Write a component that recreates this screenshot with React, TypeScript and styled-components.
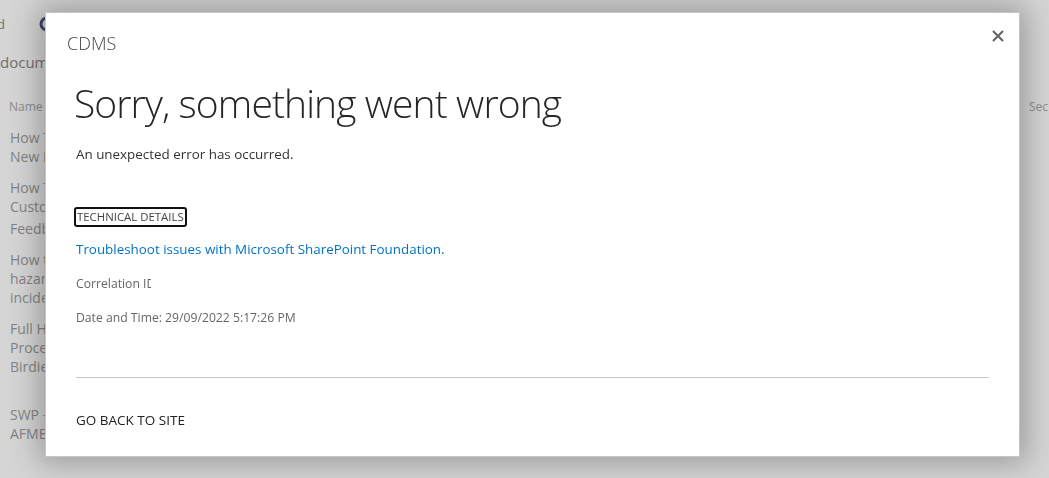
import React from "react";
import styled, { createGlobalStyle } from "styled-components";

const GlobalStyle = createGlobalStyle`
    html, body {
        margin: 0;
        padding: 0;
        width: 100%;
        height: 100%;
        overflow: hidden;
    }
    body {
        background: #d5d5d5;
        font-family: "Open Sans", "Noto Sans", sans-serif;
    }
`

// pagina de fundo (atras do overlay)
const Pagina = styled.div`
    width: 1049px;
    height: 478px;
    color: #838383;
    font-size: 14px;
`

const TopBar = styled.div`
    display: flex;
    align-items: center;
    gap: 30px;
    height: 24px;
    padding-top: 12px;
    font-size: 13px;
    color: #6f6f6f;
`

const Breadcrumb = styled.div`
    margin-top: 16px;
    font-size: 15px;
    color: #6f6f6f;
    white-space: nowrap;
`

const Cabecalho = styled.div`
    display: flex;
    justify-content: space-between;
    margin-top: 26px;
    padding: 0 0 0 9px;
    font-size: 12px;
    color: #8c8c8c;
    white-space: nowrap;
`

const Lista = styled.div`
    display: flex;
    flex-direction: column;
    padding-left: 10px;
    margin-top: 13px;
`

const Item = styled.div<{ $espaco: number }>`
    display: flex;
    flex-direction: column;
    margin-top: ${(p) => p.$espaco}px;
    line-height: 19px;
    white-space: nowrap;
`

const Dialogo = styled.div`
    position: fixed;
    top: 12px;
    left: 45px;
    width: 975px;
    height: 445px;
    box-sizing: border-box;
    background: #ffffff;
    border: 1px solid #c6c6c6;
    box-shadow: 0 0 28px 6px rgba(0, 0, 0, 0.28);
    display: flex;
    flex-direction: column;
    padding: 18px 30px 0 30px;
`

const TituloBarra = styled.div`
    display: flex;
    justify-content: space-between;
    align-items: flex-start;
    margin-left: -9px;
    margin-right: -14px;

    h2 {
        margin: 0;
        font-size: 18px;
        font-weight: 300;
        color: #444444;
        line-height: 24px;
    }
`

const BotaoFechar = styled.button`
    border: none;
    background: none;
    padding: 0;
    margin: -2px -2px 0 0;
    width: 14px;
    height: 14px;
    display: flex;
    cursor: pointer;
`

const Titulo = styled.h1`
    margin: 22px 0 0 -2px;
    font-size: 39px;
    font-weight: 300;
    color: #262626;
    line-height: 52px;
    letter-spacing: -0.9px;
`

const Mensagem = styled.p`
    margin: 16px 0 0 0;
    font-size: 13.4px;
    color: #333333;
    line-height: 18px;
`

const BotaoDetalhes = styled.button`
    align-self: flex-start;
    margin: 44px 0 0 -2px;
    padding: 1px 1px;
    font-family: inherit;
    font-size: 11.4px;
    color: #444444;
    background: #ffffff;
    border: 2px solid #111111;
    border-radius: 3px;
    line-height: 14px;
    text-transform: uppercase;
    cursor: pointer;
`

const Link = styled.a`
    margin-top: 13px;
    font-size: 13.4px;
    color: #0072c6;
    text-decoration: none;
    line-height: 18px;
`

const Detalhe = styled.div<{ $topo: number }>`
    margin-top: ${(p) => p.$topo}px;
    font-size: 12.2px;
    color: #666666;
    line-height: 18px;
    white-space: nowrap;
`

const Cortado = styled.span`
    display: inline-block;
    width: 75px;
    overflow: hidden;
    vertical-align: top;
`

const Linha = styled.hr`
    margin: 50px 0 0 0;
    border: none;
    border-top: 1px solid #c8c8c8;
`

const Voltar = styled.a`
    margin-top: 32px;
    font-size: 13.5px;
    color: #222222;
    text-decoration: none;
    text-transform: uppercase;
    line-height: 20px;
    align-self: flex-start;
`

const itens = [
    { espaco: 0, linhas: ["How To Create A", "New Document"] },
    { espaco: 12, linhas: ["How To Submit", "Customer"] },
    { espaco: 3, linhas: ["Feedback"] },
    { espaco: 12, linhas: ["How to report a", "hazard or", "incident"] },
    { espaco: 12, linhas: ["Full Health", "Procedure", "Birdies"] },
    { espaco: 29, linhas: ["SWP -", "AFME"] },
]

const App: React.FC = () => {
    return (
        <>
            <GlobalStyle />
            <Pagina>
                <TopBar>
                    <span style={{ marginLeft: -3 }}>d</span>
                    <svg width="16" height="16" viewBox="0 0 16 16" style={{ marginLeft: 4 }}>
                        <circle cx="8" cy="8" r="6" fill="none" stroke="#3c4a6e" strokeWidth="3" />
                    </svg>
                </TopBar>
                <Breadcrumb>documents</Breadcrumb>
                <Cabecalho>
                    <span>Name</span>
                    <span style={{ width: 20 }}>Sec</span>
                </Cabecalho>
                <Lista>
                    {itens.map((item, i) => (
                        <Item key={i} $espaco={item.espaco}>
                            {item.linhas.map((l) => (
                                <span key={l}>{l}</span>
                            ))}
                        </Item>
                    ))}
                </Lista>
            </Pagina>

            <Dialogo role="dialog">
                <TituloBarra>
                    <h2>CDMS</h2>
                    <BotaoFechar aria-label="Close">
                        <svg width="14" height="14" viewBox="0 0 14 14">
                            <path d="M2 2 L12 12 M12 2 L2 12" stroke="#666666" strokeWidth="2.2" />
                        </svg>
                    </BotaoFechar>
                </TituloBarra>
                <Titulo>Sorry, something went wrong</Titulo>
                <Mensagem>An unexpected error has occurred.</Mensagem>
                <BotaoDetalhes>Technical Details</BotaoDetalhes>
                <Link href="#">Troubleshoot issues with Microsoft SharePoint Foundation.</Link>
                <Detalhe $topo={17}><Cortado>Correlation ID:</Cortado></Detalhe>
                <Detalhe $topo={16}>Date and Time: 29/09/2022 5:17:26 PM</Detalhe>
                <Linha />
                <Voltar href="#">Go back to site</Voltar>
            </Dialogo>
        </>
    )
}

export default App;
